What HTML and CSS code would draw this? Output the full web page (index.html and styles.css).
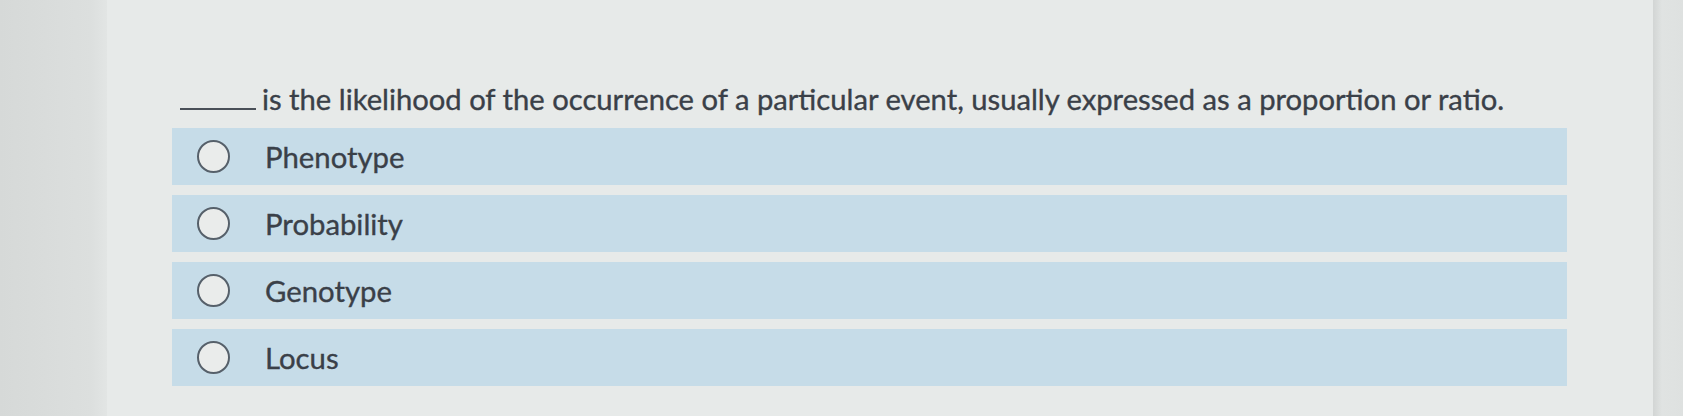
FILE: index.html
```html
<!DOCTYPE html>
<html lang="en">
<head>
    <meta charset="UTF-8">
    <meta name="viewport" content="width=device-width, initial-scale=1.0">
    <title>Question</title>
    <link rel="stylesheet" href="styles.css">
</head>
<body>
    <div class="side-left"></div>

    <div class="page">
        <p class="question"><span class="blank"></span>is the likelihood of the occurrence of a particular event, usually expressed as a proportion or ratio.</p>

        <div class="options">
            <label class="option"><span class="radio"></span><span class="option-text">Phenotype</span></label>
            <label class="option"><span class="radio"></span><span class="option-text">Probability</span></label>
            <label class="option"><span class="radio"></span><span class="option-text">Genotype</span></label>
            <label class="option"><span class="radio"></span><span class="option-text">Locus</span></label>
        </div>
    </div>

    <div class="side-right"></div>
</body>
</html>
```

FILE: styles.css
```css
body {
    margin: 0;
    height: 416px;
    overflow: hidden;
    display: flex;
    background-color: #dfe2e1;
    font-family: Lato, "Open Sans", sans-serif;
    color: #3a4048;
    -webkit-text-stroke: 0.35px #3a4048;
}
.side-left {
    width: 107px;
    background: linear-gradient(to right, #d6d9d8, #dcdfde 85%, #e2e5e4);
}
.page {
    width: 1546px;
    background-color: #e7eae9;
    padding-left: 65px;
    box-sizing: border-box;
}
.side-right {
    flex: 1;
    background: linear-gradient(to right, #d2d5d4, #e0e3e2 30%, #dee1e0);
}
.question {
    margin: 84px 0 14px 8px;
    font-size: 29.2px;
    line-height: 30px;
    white-space: nowrap;
}
.blank {
    display: inline-block;
    width: 76px;
    height: 10px;
    border-bottom: 2px solid #4a5058;
    margin-right: 6px;
}
.options {
    display: flex;
    flex-direction: column;
    gap: 10px;
    width: 1395px;
}
.option {
    display: flex;
    align-items: center;
    height: 57px;
    padding-left: 25px;
    background-color: #c6dce8;
}
.radio {
    width: 29px;
    height: 29px;
    border: 2px solid #56606a;
    border-radius: 50%;
    background-color: #eaeceb;
    margin-right: 35px;
}
.option-text {
    font-size: 29.3px;
}
```
